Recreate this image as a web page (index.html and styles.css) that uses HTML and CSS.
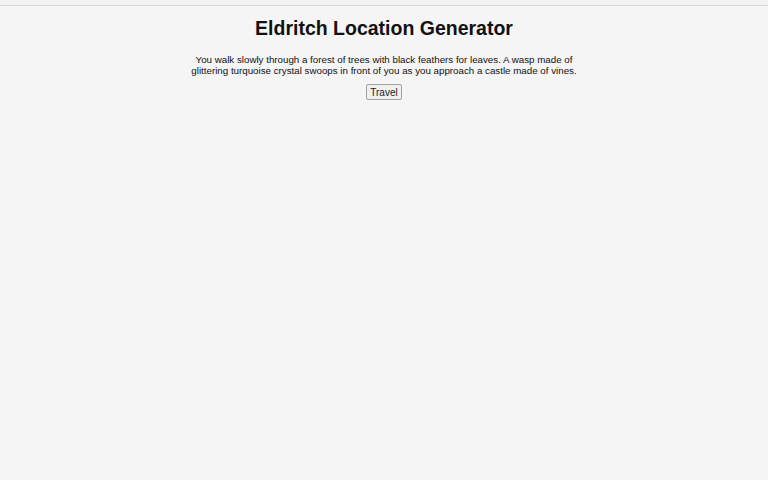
FILE: index.html
```html
<!DOCTYPE html>
<html lang="en">
<head>
    <meta charset="UTF-8">
    <meta name="viewport" content="width=device-width, initial-scale=1.0">
    <title>Eldritch Location Generator</title>
    <link rel="stylesheet" href="styles.css">
</head>
<body>
    <div class="topbar"></div>

    <div class="container">
        <h1>Eldritch Location Generator</h1>
        <p id="location">You walk slowly through a forest of trees with black feathers for leaves. A wasp made of glittering turquoise crystal swoops in front of you as you approach a castle made of vines.</p>
        <button id="travel-btn">Travel</button>
    </div>
</body>
</html>
```

FILE: styles.css
```css
* {
    margin: 0;
    padding: 0;
    box-sizing: border-box;
}

body {
    font-family: "Liberation Sans", Arial, sans-serif;
    background-color: #f5f5f5;
    color: #111;
}

.topbar {
    height: 6px;
    border-bottom: 1px solid #d8d8d8;
    background-color: #f2f2f2;
}

.container {
    display: flex;
    flex-direction: column;
    align-items: center;
    text-align: center;
    padding-top: 11px;
}

h1 {
    font-size: 19.5px;
    font-weight: bold;
    margin-bottom: 14px;
}

#location {
    font-size: 9.75px;
    line-height: 11px;
    max-width: 386px;
    margin-bottom: 8px;
}

#travel-btn {
    font-family: "Liberation Sans", Arial, sans-serif;
    font-size: 10px;
    padding: 2px 3px 1px;
    background-color: #f0f0f0;
    border: 1px solid #a0a0a0;
    border-radius: 2px;
    color: #1a1a1a;
}
```
